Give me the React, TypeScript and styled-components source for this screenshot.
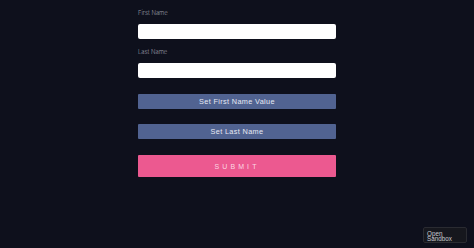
import React from "react";
import styled, { createGlobalStyle } from "styled-components";

const Global = createGlobalStyle`
  html, body { margin: 0; padding: 0; background: #0e101c; }
  body { width: 474px; height: 248px; overflow: hidden; font-family: "Liberation Sans", Arial, sans-serif; }
  * { box-sizing: border-box; }
`;

const Page = styled.div`
  width: 474px;
  height: 248px;
  background: #0e101c;
  display: flex;
  justify-content: center;
`;

const Form = styled.form`
  width: 198px;
  padding-top: 9px;
  display: flex;
  flex-direction: column;
`;

const Label = styled.label<{ $first?: boolean }>`
  display: block;
  font-family: Inter, "Noto Sans", sans-serif;
  font-weight: 300;
  font-size: 5.9px;
  line-height: 8px;
  color: #9a9ca6;
  margin-top: ${(p) => (p.$first ? "0" : "9px")};
  margin-bottom: 7px;
`;

const Input = styled.input`
  display: block;
  width: 100%;
  height: 15px;
  border: none;
  border-radius: 2px;
  background: #ffffff;
  padding: 0 6px;
  outline: none;
`;

const Button = styled.button<{ $gap: number }>`
  display: block;
  width: 100%;
  height: 15px;
  margin-top: ${(p) => p.$gap}px;
  border: none;
  border-radius: 1px;
  background: #516391;
  color: #e6e9f3;
  font-family: "Liberation Sans", Arial, sans-serif;
  font-size: 7.3px;
  letter-spacing: 0.35px;
  padding: 0;
`;

const Submit = styled.button`
  display: block;
  width: 100%;
  height: 22px;
  margin-top: 16px;
  border: none;
  border-radius: 1px;
  background: #ec5990;
  color: rgba(255, 236, 244, 0.85);
  font-family: "Liberation Sans", Arial, sans-serif;
  font-size: 7px;
  letter-spacing: 3.1px;
  text-transform: uppercase;
  padding: 0;
`;

const SandboxBadge = styled.a`
  position: fixed;
  right: 7px;
  bottom: 5px;
  width: 44px;
  height: 16px;
  background: #16171d;
  border: 1px solid #2a2b31;
  border-radius: 2px;
  color: #c9cad0;
  font-family: "Liberation Sans", Arial, sans-serif;
  font-size: 6.3px;
  line-height: 5.5px;
  padding: 2.5px 0 0 3px;
  text-decoration: none;
`;

export default function App() {
  return (
    <>
      <Global />
      <Page>
        <Form onSubmit={(e) => e.preventDefault()}>
          <Label $first>First Name</Label>
          <Input />
          <Label>Last Name</Label>
          <Input />
          <Button type="button" $gap={16}>Set First Name Value</Button>
          <Button type="button" $gap={15}>Set Last Name</Button>
          <Submit type="submit">Submit</Submit>
        </Form>
      </Page>
      <SandboxBadge>
        Open
        <br />
        Sandbox
      </SandboxBadge>
    </>
  );
}
